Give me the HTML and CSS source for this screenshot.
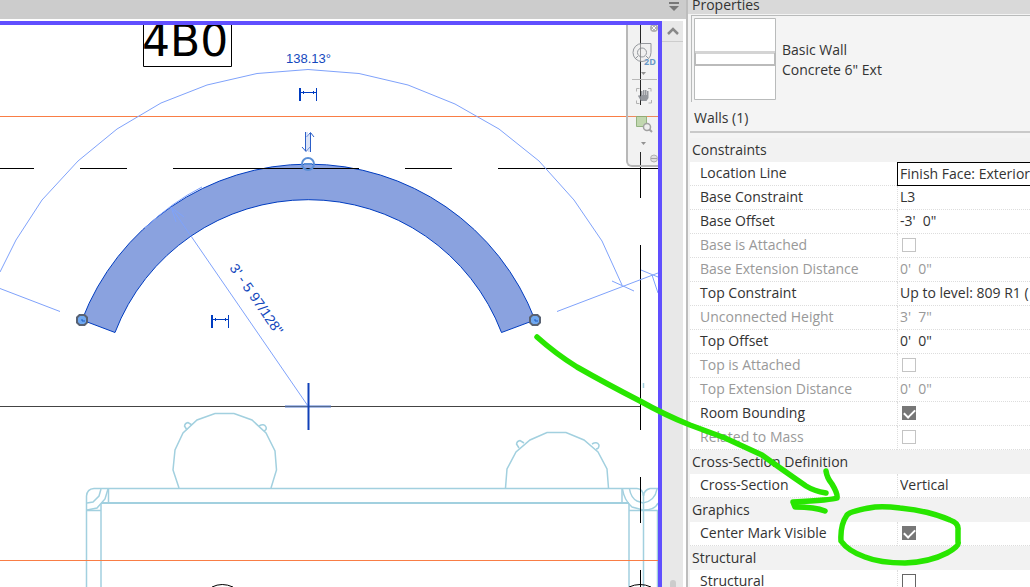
FILE: index.html
```
<!DOCTYPE html>
<html lang="en">
<head>
    <meta charset="utf-8">
    <title>Wall Properties</title>
    <link rel="stylesheet" href="styles.css">
</head>
<body>
    <div class="app">
        <main class="workspace">
            <div class="tab-bar">
                <button class="tab-menu" aria-label="Views">
                    <svg width="12" height="10" viewBox="0 0 12 10"><path d="M1 1h10" stroke="#777" stroke-width="2"/><path d="M1 4h10l-5 5z" fill="#777"/></svg>
                </button>
            </div>
            <div class="view-row">
                <div class="view">
                    <svg class="drawing" viewBox="0 25 658 562" preserveAspectRatio="xMaxYMin slice">
                        <!-- furniture -->
                        <g class="furniture">
                            <path d="M179 488L173 470L175 450L183 433L197 420L215 413.500H234L252 420L266 433L275 451L276.500 470L271 488"/>
                            <path d="M187 430L184.500 426Q185 423 188 422.500L192 425M259 426Q264 423 266 427Q267 430 264 431"/>
                            <path d="M505.500 488L507 469L516 452L530 440L547 432.500H566L584 440L598 452L607 469L608.500 488"/>
                            <path d="M519 448L516.500 444Q517 441 520 440.500L524 443M592 444Q597 441 599 445Q599 449 596 449"/>
                            <path d="M658 488.500H650Q644 490 643.500 496Q643 489 637 488.500H94Q87 489 86.500 496V587"/>
                            <path d="M101 587V503.500M643.500 494V587M629 587V503.500M657.500 510V587"/>
                            <path d="M101 503H629" stroke-width="2"/>
                            <path d="M108.500 489V503M87 510.500H101M622 489V503M629 510.500H658"/>
                            <path d="M101 489L99 496L93 502L87 503M108 489L105 499L97 508L87 510"/>
                            <path d="M622.500 489Q624 500 632 507L643 510Q655 510 658 503M629.500 489Q631 498 637 501L643 503Q655 501 657 489"/>
                            <path d="M643.500 383V388"/>
                        </g>

                        <!-- grids and levels -->
                        <path class="grid-line" d="M0 116.500H658M0 560.500H658"/>
                        <path class="centerline" d="M0 168.500H34M80 168.500H127M173 168.500H359M405 168.500H452M498 168.500H658"/>
                        <path class="centerline" d="M640.500 25V105M640.500 152V198M640.500 245V430M640.500 477V523M640.500 570V587"/>
                        <path class="level-line" d="M0 406.500H640"/>
                        <path class="centerline" d="M212 587Q222 582 233 587M629 587Q640 582 651 587"/>

                        <!-- room tag -->
                        <path class="centerline" d="M143.500 25V66.500H231.500V25"/>
                        <text class="tag" x="142" y="56">4B0</text>

                        <!-- selected wall -->
                        <path class="wall" d="M82 320A242.500 242.500 0 0 1 535 320L501.500 332.500A207 207 0 0 0 115 332.500Z"/>
                        <path class="centerline" d="M173 168.500H359"/>

                        <!-- temporary dimensions -->
                        <g class="dimension">
                            <path d="M0 272L16 240L42 200L78 161L117 129L161 103L207 85L257 73.500L308 69.500L359 73.500L408 85L455 104L499 129L539 161L574 200L602 241L622 285"/>
                            <path d="M0 288.500L60 311.500M557 311.500L658 273M612 281L634 291M641 270L658 277M652 275L658 293"/>
                            <path d="M308 406L171 207M171 207L176 222M171 207L184 217M145 228Q172 202 202 187"/>
                        </g>
                        <text class="dim-text" x="286" y="63">138.13°</text>
                        <text class="dim-text dim-radius" transform="translate(229 268) rotate(55.400)">3' - 5 97/128"</text>
                        <g id="dim-toggle" class="control">
                            <path d="M300 88V101" stroke-width="2"/>
                            <path d="M316.500 88V101M301 92.500H316M303.500 91V94M313.500 91V94"/>
                        </g>
                        <use href="#dim-toggle" x="-88" y="227"/>

                        <!-- flip arrows and grips -->
                        <path class="flip" d="M305.500 132V151M302 147L306 151.500L310 147M310.500 152V133M306.500 137L310.500 132.500L314 137"/>
                        <path class="flip-soft" d="M307 132V150M309 152V134"/>
                        <path class="center-soft" d="M285 406.500H331"/>
                        <path class="center-line" d="M285 406.500H331"/>
                        <path class="center-mark" d="M308.500 383V430"/>
                        <circle class="mid-grip" cx="308" cy="164" r="6"/>
                        <path class="mid-grip" d="M304 164H312"/>
                        <g id="end-grip">
                            <path d="M79.500 315H84.500L87 317.500V322.500L84.500 325H79.500L77 322.500V317.500Z" fill="#6fa8f0" stroke="#596273" stroke-width="2"/>
                            <path d="M82 319V321H85" fill="none" stroke="#205cc4"/>
                        </g>
                        <use href="#end-grip" x="453"/>
                    </svg>

                    <nav class="nav-bar" aria-label="Navigation">
                        <button aria-label="Close"><svg width="32" height="16" viewBox="626 25 32 16"><circle cx="654" cy="28" r="4" fill="#aaa"/><path d="M652 26l4 4M656 26l-4 4" stroke="#fff"/></svg></button>
                        <button aria-label="2D steering wheel">
                            <svg width="32" height="29" viewBox="626 41 32 29"><path d="M642 43.500h9v9a9 9 0 1 1-9-9z" fill="#eee" fill-opacity=".6" stroke="#8b8f94"/><circle cx="642" cy="52.500" r="4.500" fill="none" stroke="#8b8f94"/><path d="M638 56l-3 3M646 56l2 2" stroke="#8b8f94"/><text class="wheel-text" x="644" y="65">2D</text></svg>
                        </button>
                        <button aria-label="Wheel options"><svg width="32" height="9" viewBox="626 70 32 9"><path d="M641 72h5l-2.500 3z" fill="#888"/></svg></button>
                        <hr>
                        <button aria-label="Pan">
                            <svg width="32" height="28" viewBox="626 82 32 28"><path d="M636.500 91.500v-3h3M648 88.500h3v3M651.500 100v3h-3M639.500 103.500h-3v-3" fill="none" stroke="#aaa"/><path d="M641 101l-3-5 1-1 2 1.500V91h1.500v4h.5v-5h1.500v5h.5v-5h1.500v5h.5v-4h1.500v7l-2 3z" fill="#8b8f96"/></svg>
                        </button>
                        <button aria-label="Zoom in region">
                            <svg width="32" height="30" viewBox="626 110 32 30"><path d="M636.500 116.500h10v10h-10z" fill="#bcd5a8" stroke="#8aad75"/><circle cx="647" cy="127" r="3.500" fill="#eee" stroke="#999" stroke-width="1.500"/><path d="M649.500 129.500l2.500 2.500" stroke="#999" stroke-width="2"/></svg>
                        </button>
                        <button aria-label="Zoom options"><svg width="32" height="8" viewBox="626 140 32 8"><path d="M641 142h5l-2.500 3z" fill="#888"/></svg></button>
                        <button aria-label="Customize"><svg width="32" height="16" viewBox="626 148 32 16"><circle cx="654" cy="158.500" r="3.500" fill="#ddd" stroke="#aaa"/><path d="M651 158.500h6" stroke="#999"/></svg></button>
                    </nav>
                </div>
                <div class="scrollbar">
                    <button class="scroll-up" aria-label="Scroll up"><svg width="12" height="8" viewBox="0 0 12 8"><path d="M1 7l5-5 5 5" fill="none" stroke="#888" stroke-width="2.500"/></svg></button>
                    <div class="scroll-thumb"></div>
                </div>
            </div>
        </main>

        <aside class="panel">
            <h1>Properties</h1>
            <div class="type-selector">
                <svg class="preview" width="82" height="82" viewBox="0 0 82 82">
                    <path d="M.5.5h81v81h-81z" fill="#fff" stroke="#b9bbbb"/>
                    <path d="M1 34.500h80" stroke="#d4d4d4" stroke-width="3"/>
                    <path d="M1 47h80" stroke="#bbb" stroke-width="2"/>
                    <path d="M1.500 35v12M80.500 35v12" stroke="#bbb"/>
                </svg>
                <p>Basic Wall<br>Concrete 6" Ext</p>
            </div>
            <div class="filter">Walls (1)</div>
            <table>
                <colgroup><col class="name-col"><col></colgroup>
                <tbody>
                    <tr class="group"><th colspan="2">Constraints</th></tr>
                    <tr class="active"><th><label for="location">Location Line</label></th><td><select id="location"><option>Finish Face: Exterior</option></select></td></tr>
                    <tr><th><label for="base">Base Constraint</label></th><td><input type="text" id="base" value="L3"></td></tr>
                    <tr><th><label for="base-offset">Base Offset</label></th><td><input type="text" id="base-offset" value="-3'  0&quot;"></td></tr>
                    <tr class="off"><th><label for="base-attached">Base is Attached</label></th><td><input type="checkbox" id="base-attached" disabled></td></tr>
                    <tr class="off"><th><label for="base-ext">Base Extension Distance</label></th><td><input type="text" id="base-ext" value="0'  0&quot;" disabled></td></tr>
                    <tr><th><label for="top">Top Constraint</label></th><td><input type="text" id="top" value="Up to level: 809 R1 ("></td></tr>
                    <tr class="off"><th><label for="height">Unconnected Height</label></th><td><input type="text" id="height" value="3'  7&quot;" disabled></td></tr>
                    <tr><th><label for="top-offset">Top Offset</label></th><td><input type="text" id="top-offset" value="0'  0&quot;"></td></tr>
                    <tr class="off"><th><label for="top-attached">Top is Attached</label></th><td><input type="checkbox" id="top-attached" disabled></td></tr>
                    <tr class="off"><th><label for="top-ext">Top Extension Distance</label></th><td><input type="text" id="top-ext" value="0'  0&quot;" disabled></td></tr>
                    <tr><th><label for="room">Room Bounding</label></th><td><input type="checkbox" id="room" checked></td></tr>
                    <tr class="off"><th><label for="mass">Related to Mass</label></th><td><input type="checkbox" id="mass" disabled></td></tr>
                    <tr class="group"><th colspan="2">Cross-Section Definition</th></tr>
                    <tr><th><label for="section">Cross-Section</label></th><td><input type="text" id="section" value="Vertical"></td></tr>
                    <tr class="group"><th colspan="2">Graphics</th></tr>
                    <tr><th><label for="center">Center Mark Visible</label></th><td><input type="checkbox" id="center" checked></td></tr>
                    <tr class="group"><th colspan="2">Structural</th></tr>
                    <tr><th><label for="structural">Structural</label></th><td><input type="checkbox" id="structural"></td></tr>
                </tbody>
            </table>
        </aside>

        <!-- markup pen -->
        <svg class="markup" width="1030" height="587" viewBox="0 0 1030 587">
            <path d="M537 337Q556 354 577 367Q605 383 640 401Q665 415 690 425L725 438L762 455Q780 468 806 486Q814 491 826 493"/>
            <path d="M826 471Q827 478 832 484Q838 494 837 498Q832 500 793 502L795 507Q815 507 825 511"/>
            <path d="M900 508Q885 506 875 507Q850 511 847 515Q840 525 841 541Q848 551 865 557Q880 563 905 563Q930 562 947 553Q960 546 958 542V530Q959 523 950 520Q930 511 900 508Z"/>
        </svg>
    </div>
</body>
</html>
```
FILE: styles.css
```
* {
    box-sizing: border-box;
}

body {
    margin: 0;
    font-family: "Open Sans", "Noto Sans", sans-serif;
    font-size: 14px;
    color: #333;
    background-color: #fff;
}

button {
    display: block;
    padding: 0;
    border: none;
    background: none;
    cursor: pointer;
}

svg {
    display: block;
}

.app {
    position: relative;
    display: flex;
    height: 100vh;
    overflow: hidden;
}

/* Drawing area */
.workspace {
    flex: 1;
    min-width: 0;
    display: flex;
    flex-direction: column;
}

.tab-bar {
    flex: none;
    height: 19px;
    display: flex;
    align-items: flex-start;
    justify-content: flex-end;
    padding: 2px 6px;
    background-color: #ccc;
}

.view-row {
    flex: 1;
    min-height: 0;
    display: flex;
    padding: 2px 3px 0 0;
}

.view {
    position: relative;
    flex: 1;
    min-width: 0;
    border-top: 4px solid #604fff;
    border-right: 4px solid #604fff;
}

.drawing {
    width: 100%;
    height: 100%;
    fill: none;
}

.furniture {
    stroke: #a2d0df;
    stroke-width: 1.5;
}

.grid-line {
    stroke: #f97d45;
}

.centerline {
    stroke: #000;
}

.level-line {
    stroke: #444;
}

.wall {
    fill: #8aa2df;
    stroke: #003cc0;
}

.dimension {
    stroke: #7fa2fb;
}

.tag {
    font: 44px "DejaVu Sans", Verdana, sans-serif;
    fill: #000;
}

.dim-text {
    font: 13px "Liberation Sans", Arial, sans-serif;
    fill: #1448bd;
}

.dim-radius {
    font-size: 14px;
}

.control {
    stroke: #003cc0;
}

.flip {
    stroke: #2c5fc8;
}

.flip-soft {
    stroke: #b4c6ee;
}

.center-soft {
    stroke: #a9bce8;
    stroke-width: 3;
}

.center-line {
    stroke: #53698f;
}

.center-mark {
    stroke: #1040b8;
    stroke-width: 2;
}

.mid-grip {
    stroke: #5a8fd6;
    stroke-width: 2;
}

.nav-bar {
    position: absolute;
    top: 0;
    right: 0;
    width: 32px;
    height: 142px;
    border-left: 2px solid #b8b8b8;
    border-bottom: 2px solid #b8b8b8;
    border-bottom-left-radius: 6px;
    background-color: rgba(190, 190, 190, 0.2);
    overflow: hidden;
}

.nav-bar button {
    display: flex;
    justify-content: flex-end;
    width: 30px;
}

.nav-bar svg {
    flex: none;
    opacity: 0.9;
}

.nav-bar hr {
    height: 1px;
    margin: 0 1px 2px 4px;
    border: none;
    background-color: #b8b8b8;
}

.wheel-text {
    font: bold 9px "Open Sans", sans-serif;
    fill: #5b8fc2;
}

.scrollbar {
    flex: none;
    width: 21px;
    display: flex;
    flex-direction: column;
    align-items: center;
    justify-content: space-between;
    background-color: #e8e8e8;
}

.scroll-up {
    display: flex;
    align-items: center;
    justify-content: center;
    width: 100%;
    height: 21px;
    border-bottom: 1px solid #ccc;
}

.scroll-thumb {
    width: 6px;
    height: 7px;
    border-radius: 3px 3px 0 0;
    background-color: #ccc;
}

/* Properties palette */
.panel {
    flex: none;
    width: 344px;
    border-left: 2px solid #bdbdbd;
    background-color: #f4f4f4;
}

.panel h1 {
    height: 14px;
    margin: 0;
    padding-left: 4px;
    font-size: 14px;
    font-weight: normal;
    line-height: 10px;
    background-color: #d9d9d9;
}

.type-selector {
    display: flex;
    align-items: flex-start;
    gap: 6px;
    height: 87px;
    margin: 1px 0 0 3px;
    padding: 2px 0 0 2px;
    border-top: 1px solid #b9bbbb;
    border-left: 1px solid #b9bbbb;
}

.type-selector p {
    margin: 22px 0 0;
    line-height: 20px;
}

.filter {
    height: 31px;
    margin-left: 2px;
    padding-left: 4px;
    line-height: 32px;
    border-bottom: 2px solid #c9c9c9;
}

table {
    width: calc(100% - 2px);
    margin: 5px 0 0 2px;
    border-collapse: separate;
    border-spacing: 0;
    table-layout: fixed;
}

.name-col {
    width: 207px;
}

tr {
    height: 24px;
    background-color: #fff;
}

th, td {
    height: 24px;
    padding: 0 0 0 10px;
    font-weight: normal;
    line-height: 22px;
    text-align: left;
    vertical-align: top;
    white-space: nowrap;
    border-bottom: 1px dotted #ddd;
}

td {
    padding-left: 2px;
    border-left: 1px dotted #ddd;
}

.group {
    background-color: #f2f2f2;
}

.group th {
    padding-left: 2px;
    line-height: 24px;
    border-bottom: none;
}

.off {
    color: #999;
}

input[type="text"],
select {
    display: block;
    width: 100%;
    height: 22px;
    padding: 0;
    border: none;
    border-radius: 0;
    font: inherit;
    color: inherit;
    background: none;
    appearance: none;
}

.active td {
    border: 1px solid #000;
    border-right: none;
}

.active select {
    height: 20px;
}

input[type="checkbox"] {
    display: block;
    width: 14px;
    height: 14px;
    margin: 4px 0 0 2px;
    border: 1px solid #666;
    background-color: #fff;
    appearance: none;
}

input[type="checkbox"]:disabled {
    border-color: #c4c4c4;
}

input[type="checkbox"]:checked {
    border-color: #777;
    background-color: #777;
}

input[type="checkbox"]:checked::before {
    content: "";
    display: block;
    width: 9px;
    height: 5px;
    margin: 2px 1px;
    border-left: 2px solid #fff;
    border-bottom: 2px solid #fff;
    transform: rotate(-45deg);
}

/* Pen strokes lie over both the view and the palette */
.markup {
    position: absolute;
    top: 0;
    right: 0;
    fill: none;
    stroke: #28e600;
    stroke-width: 5.5;
    stroke-linecap: round;
    stroke-linejoin: round;
    pointer-events: none;
}
```
